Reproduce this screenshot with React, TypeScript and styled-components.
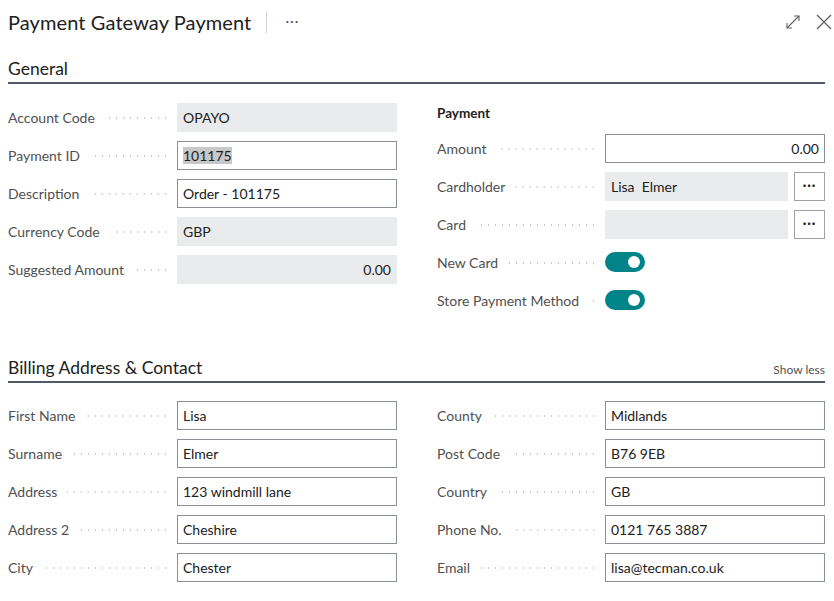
import styled, { createGlobalStyle } from 'styled-components';

const GlobalStyle = createGlobalStyle`
  html, body {
    margin: 0;
    padding: 0;
    background: #ffffff;
  }
  body {
    font-family: 'Lato', 'Noto Sans', sans-serif;
    color: #212121;
    -webkit-font-smoothing: antialiased;
  }
`;

interface FieldData {
  label: string;
  value?: string;
  kind?: 'input' | 'readonly' | 'toggle';
  align?: 'left' | 'right';
  lookup?: boolean;
  selected?: boolean;
}

const generalLeft: FieldData[] = [
  { label: 'Account Code', value: 'OPAYO', kind: 'readonly' },
  { label: 'Payment ID', value: '101175', kind: 'input', selected: true },
  { label: 'Description', value: 'Order - 101175', kind: 'input' },
  { label: 'Currency Code', value: 'GBP', kind: 'readonly' },
  { label: 'Suggested Amount', value: '0.00', kind: 'readonly', align: 'right' },
];

const generalRight: FieldData[] = [
  { label: 'Amount', value: '0.00', kind: 'input', align: 'right' },
  { label: 'Cardholder', value: 'Lisa  Elmer', kind: 'readonly', lookup: true },
  { label: 'Card', value: '', kind: 'readonly', lookup: true },
  { label: 'New Card', kind: 'toggle' },
  { label: 'Store Payment Method', kind: 'toggle' },
];

const billingLeft: FieldData[] = [
  { label: 'First Name', value: 'Lisa' },
  { label: 'Surname', value: 'Elmer' },
  { label: 'Address', value: '123 windmill lane' },
  { label: 'Address 2', value: 'Cheshire' },
  { label: 'City', value: 'Chester' },
];

const billingRight: FieldData[] = [
  { label: 'County', value: 'Midlands' },
  { label: 'Post Code', value: 'B76 9EB' },
  { label: 'Country', value: 'GB' },
  { label: 'Phone No.', value: '0121 765 3887' },
  { label: 'Email', value: 'lisa@tecman.co.uk' },
];

const Page = styled.div`
  width: 834px;
  height: 601px;
  padding: 0 9px 0 8px;
  box-sizing: border-box;
  overflow: hidden;
`;

const TitleBar = styled.div`
  display: flex;
  align-items: center;
  height: 44px;
`;

const Title = styled.h1`
  margin: 0;
  font-size: 20px;
  font-weight: 400;
  color: #212121;
  letter-spacing: 0.1px;
`;

const TitleDivider = styled.span`
  width: 1px;
  height: 22px;
  background: #d4d4d4;
  margin: 0 18px 0 15px;
`;

const MoreDots = styled.span`
  font-size: 14px;
  color: #555;
  letter-spacing: 1px;
  margin-top: -3px;
`;

const WindowIcons = styled.div`
  margin-left: auto;
  display: flex;
  align-items: center;
  gap: 14px;
  margin-right: -8px;
`;

const Section = styled.section<{ $top: number }>`
  margin-top: ${(p) => p.$top}px;
`;

const SectionHeader = styled.div`
  display: flex;
  align-items: flex-end;
  justify-content: space-between;
  border-bottom: 2px solid #4f5a6b;
  padding-bottom: 3px;
  height: 24px;
`;

const SectionTitle = styled.h2`
  margin: 0;
  font-size: 17.5px;
  font-weight: 400;
  color: #212121;
`;

const ShowLess = styled.span`
  font-size: 12px;
  color: #505050;
  margin-bottom: 1px;
`;

const Columns = styled.div<{ $pad: number }>`
  display: grid;
  grid-template-columns: 389px 388px;
  column-gap: 40px;
  padding-top: ${(p) => p.$pad}px;
`;

const Column = styled.div`
  display: flex;
  flex-direction: column;
`;

const GroupTitle = styled.div`
  font-size: 13.5px;
  font-weight: 700;
  color: #212121;
  height: 30px;
  display: flex;
  align-items: center;
  padding-bottom: 1px;
`;

const Row = styled.div`
  display: flex;
  align-items: center;
  height: 38px;
`;

const LabelCell = styled.div<{ $width: number }>`
  width: ${(p) => p.$width}px;
  flex: none;
  display: flex;
  align-items: center;
  overflow: hidden;
  padding-right: 8px;
  box-sizing: border-box;
`;

const Label = styled.span`
  font-size: 14px;
  color: #505050;
  white-space: nowrap;
`;

const Leader = styled.span`
  flex: 1;
  min-width: 6px;
  height: 2px;
  margin: 2px 0 0 10px;
  background-image: radial-gradient(circle, #c6c6c6 0.8px, transparent 1px);
  background-size: 7px 2px;
  background-position: right center;
  background-repeat: repeat-x;
`;

const FieldBox = styled.div<{ $kind: 'input' | 'readonly'; $align: 'left' | 'right' }>`
  flex: 1;
  height: 29px;
  box-sizing: border-box;
  display: flex;
  align-items: center;
  justify-content: ${(p) => (p.$align === 'right' ? 'flex-end' : 'flex-start')};
  padding: 0 5px;
  font-size: 14px;
  color: #212121;
  background: ${(p) => (p.$kind === 'readonly' ? '#eaebec' : '#ffffff')};
  border: 1px solid ${(p) => (p.$kind === 'readonly' ? '#eaebec' : '#8a8f98')};
  white-space: pre;
`;

const Selected = styled.span`
  background: #c8c8c8;
`;

const LookupButton = styled.div`
  width: 31px;
  height: 29px;
  box-sizing: border-box;
  margin-left: 6px;
  border: 1px solid #a0a0a0;
  display: flex;
  align-items: center;
  justify-content: center;
  font-size: 13px;
  font-weight: 700;
  color: #212121;
  letter-spacing: 1px;
  padding-bottom: 2px;
`;

const Toggle = styled.div<{ $on: boolean }>`
  width: 40px;
  height: 20px;
  border-radius: 10px;
  background: ${(p) => (p.$on ? '#008489' : '#ffffff')};
  position: relative;
  &::after {
    content: '';
    position: absolute;
    top: 4px;
    right: ${(p) => (p.$on ? '5px' : '23px')};
    width: 12px;
    height: 12px;
    border-radius: 50%;
    background: #ffffff;
  }
`;

const Field = ({ field, labelWidth }: { field: FieldData; labelWidth: number }) => {
  const kind = field.kind ?? 'input';
  return (
    <Row>
      <LabelCell $width={labelWidth}>
        <Label>{field.label}</Label>
        <Leader />
      </LabelCell>
      {kind === 'toggle' ? (
        <Toggle $on />
      ) : (
        <>
          <FieldBox $kind={kind} $align={field.align ?? 'left'}>
            {field.selected ? <Selected>{field.value}</Selected> : field.value}
          </FieldBox>
          {field.lookup && <LookupButton>···</LookupButton>}
        </>
      )}
    </Row>
  );
};

const ExpandIcon = () => (
  <svg width="16" height="16" viewBox="0 0 16 16" fill="none" stroke="#616161" strokeWidth="1.1">
    <path d="M2 14 L14 2" />
    <path d="M9 2 H14 V7" />
    <path d="M2 9 V14 H7" />
  </svg>
);

const CloseIcon = () => (
  <svg width="18" height="18" viewBox="0 0 18 18" fill="none" stroke="#616161" strokeWidth="1.3">
    <path d="M2 2 L16 16 M16 2 L2 16" />
  </svg>
);

const App = () => {
  return (
    <>
      <GlobalStyle />
      <Page>
        <TitleBar>
          <Title>Payment Gateway Payment</Title>
          <TitleDivider />
          <MoreDots>···</MoreDots>
          <WindowIcons>
            <ExpandIcon />
            <CloseIcon />
          </WindowIcons>
        </TitleBar>

        <Section $top={11}>
          <SectionHeader>
            <SectionTitle>General</SectionTitle>
          </SectionHeader>
          <Columns $pad={14}>
            <Column>
              {generalLeft.map((f) => (
                <Field key={f.label} field={f} labelWidth={169} />
              ))}
            </Column>
            <Column>
              <GroupTitle>Payment</GroupTitle>
              {generalRight.map((f) => (
                <Field key={f.label} field={f} labelWidth={168} />
              ))}
            </Column>
          </Columns>
        </Section>

        <Section $top={35}>
          <SectionHeader>
            <SectionTitle>Billing Address &amp; Contact</SectionTitle>
            <ShowLess>Show less</ShowLess>
          </SectionHeader>
          <Columns $pad={13}>
            <Column>
              {billingLeft.map((f) => (
                <Field key={f.label} field={f} labelWidth={169} />
              ))}
            </Column>
            <Column>
              {billingRight.map((f) => (
                <Field key={f.label} field={f} labelWidth={168} />
              ))}
            </Column>
          </Columns>
        </Section>
      </Page>
    </>
  );
};

export default App;
